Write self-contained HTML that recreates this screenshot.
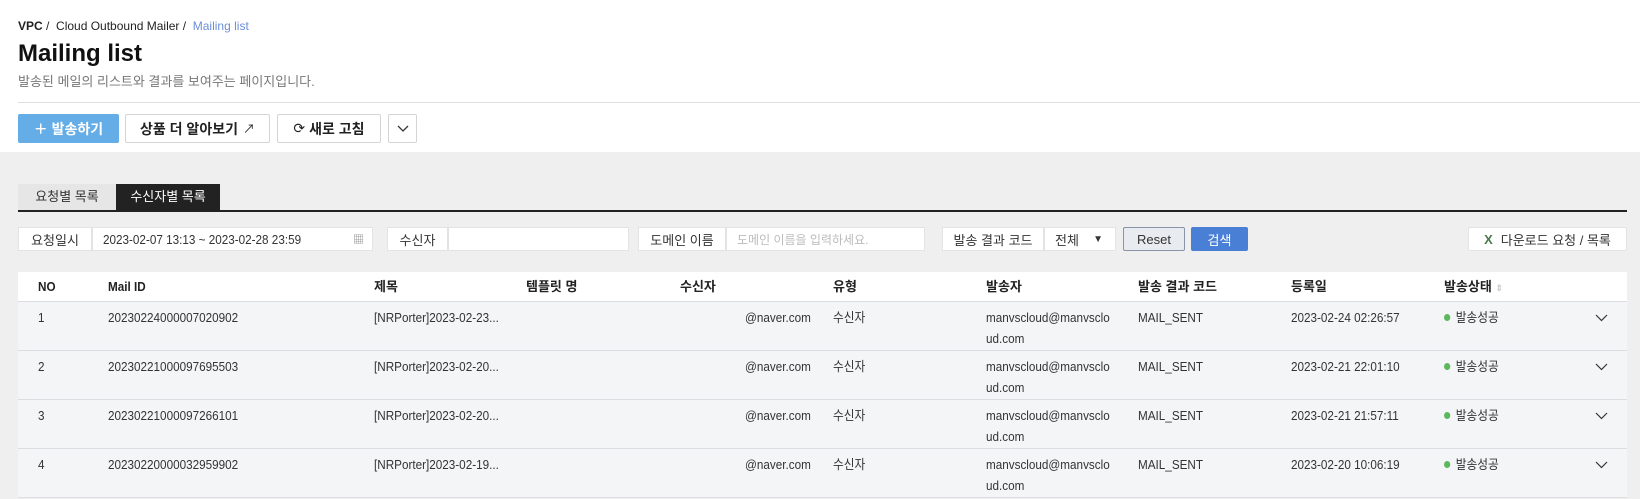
<!DOCTYPE html>
<html><head><meta charset="utf-8"><style>
*{box-sizing:border-box;margin:0;padding:0}
body{width:1640px;height:499px;overflow:hidden;background:#fff;font-family:"Liberation Sans","Noto Sans CJK KR",sans-serif;color:#222;position:relative}
.a{position:absolute}
.btn{position:absolute;top:114px;height:29px;border:1px solid #d5d5d5;border-radius:2px;background:#fff;font-size:14px;font-weight:bold;display:flex;align-items:center;justify-content:center;color:#222}
.box{position:absolute;top:227px;height:24px;background:#fff;border:1px solid #e3e3e3;font-size:13px;display:flex;align-items:center;color:#333}
.lbl{justify-content:center}
.h{position:absolute;top:272px;height:30px;line-height:30px;font-size:13px;font-weight:bold}
.row{position:absolute;left:18px;width:1609px;height:49px;background:#f4f5f7;border-bottom:1px solid #dcdde0}
.c{position:absolute;font-size:13px;line-height:21px;color:#333;transform:scaleX(0.9);transform-origin:left top;white-space:nowrap}
.sq{display:inline-block;transform:scaleX(0.9);transform-origin:left center}
.dot{display:inline-block;width:7px;height:7px;border-radius:50%;background:#5cb85c;margin-right:6px;vertical-align:1px}
</style></head><body>
<div class="a" style="left:18px;top:19px;font-size:12px;color:#222"><b>VPC</b> / &nbsp;Cloud Outbound Mailer / &nbsp;<span style="color:#6b8fd8">Mailing list</span></div>
<div class="a" style="left:18px;top:40px;font-size:24px;font-weight:bold;color:#111">Mailing list</div>
<div class="a" style="left:18px;top:71px;font-size:13px;color:#777">발송된 메일의 리스트와 결과를 보여주는 페이지입니다.</div>
<div class="a" style="left:18px;top:102px;width:1622px;height:1px;background:#e0e0e0"></div>
<div class="btn" style="left:18px;width:101px;background:#64ade6;border-color:#64ade6;color:#fff">＋ 발송하기</div>
<div class="btn" style="left:125px;width:145px">상품 더 알아보기 <span style="font-weight:normal;margin-left:5px;font-size:12px">↗</span></div>
<div class="btn" style="left:277px;width:104px"><span style="font-weight:normal;margin-right:4px">⟳</span>새로 고침</div>
<div class="btn" style="left:388px;width:29px"><svg width="12" height="8"><path d="M1 1l5 5 5-5" stroke="#333" fill="none" stroke-width="1.3"/></svg></div>
<div class="a" style="left:0;top:152px;width:1640px;height:347px;background:#efefef"></div>
<div class="a" style="left:18px;top:184px;width:98px;height:26px;background:#e6e6e6;font-size:13px;line-height:26px;text-align:center;color:#333">요청별 목록</div>
<div class="a" style="left:116px;top:184px;width:104px;height:26px;background:#222;font-size:13px;line-height:26px;text-align:center;color:#fff">수신자별 목록</div>
<div class="a" style="left:18px;top:210px;width:1609px;height:2px;background:#222"></div>
<div class="box lbl" style="left:18px;width:74px">요청일시</div>
<div class="box" style="left:92px;width:281px;padding-left:10px"><span class="sq">2023-02-07 13:13 ~ 2023-02-28 23:59</span><span style="position:absolute;right:8px;color:#888;font-size:11px">▦</span></div>
<div class="box lbl" style="left:387px;width:61px">수신자</div>
<div class="box" style="left:448px;width:181px"></div>
<div class="box lbl" style="left:638px;width:88px">도메인 이름</div>
<div class="box" style="left:726px;width:199px;padding-left:10px;color:#bbb;font-size:12px">도메인 이름을 입력하세요.</div>
<div class="box lbl" style="left:942px;width:102px">발송 결과 코드</div>
<div class="box" style="left:1044px;width:72px;padding-left:10px">전체<span style="position:absolute;right:12px;font-size:10px">▼</span></div>
<div class="box lbl" style="left:1123px;width:62px;background:#e8ebf0;border-color:#8b93a6;border-radius:2px">Reset</div>
<div class="box lbl" style="left:1191px;width:57px;background:#4a7fd6;border-color:#4a7fd6;color:#fff;border-radius:2px">검색</div>
<div class="box lbl" style="left:1468px;width:159px;border-radius:2px"><b style="color:#4a7a4a;margin-right:8px">X</b>다운로드 요청 / 목록</div>
<div class="a" style="left:18px;top:272px;width:1609px;height:30px;background:#fff;border-bottom:1px solid #dcdde0"></div>
<div class="h" style="left:38px"><span class="sq">NO</span></div>
<div class="h" style="left:108px"><span class="sq">Mail ID</span></div>
<div class="h" style="left:374px">제목</div>
<div class="h" style="left:526px">템플릿 명</div>
<div class="h" style="left:680px">수신자</div>
<div class="h" style="left:833px">유형</div>
<div class="h" style="left:986px">발송자</div>
<div class="h" style="left:1138px">발송 결과 코드</div>
<div class="h" style="left:1291px">등록일</div>
<div class="h" style="left:1444px">발송상태 <span style="color:#ccc;font-size:9px">⇕</span></div>

<div class="row" style="top:302px"></div>
<div class="row" style="top:351px"></div>
<div class="row" style="top:400px"></div>
<div class="row" style="top:449px"></div>

<div>
<div class="c" style="left:38px;top:307px">1</div><div class="c" style="left:108px;top:307px">20230224000007020902</div><div class="c" style="left:374px;top:307px">[NRPorter]2023-02-23...</div><div class="c" style="left:745px;top:307px">@naver.com</div><div class="c" style="left:833px;top:307px">수신자</div><div class="c" style="left:986px;top:307px">manvscloud@manvsclo<br>ud.com</div><div class="c" style="left:1138px;top:307px">MAIL_SENT</div><div class="c" style="left:1291px;top:307px">2023-02-24 02:26:57</div><div class="c" style="left:1444px;top:307px"><span class="dot"></span>발송성공</div>
<div class="c" style="left:38px;top:356px">2</div><div class="c" style="left:108px;top:356px">20230221000097695503</div><div class="c" style="left:374px;top:356px">[NRPorter]2023-02-20...</div><div class="c" style="left:745px;top:356px">@naver.com</div><div class="c" style="left:833px;top:356px">수신자</div><div class="c" style="left:986px;top:356px">manvscloud@manvsclo<br>ud.com</div><div class="c" style="left:1138px;top:356px">MAIL_SENT</div><div class="c" style="left:1291px;top:356px">2023-02-21 22:01:10</div><div class="c" style="left:1444px;top:356px"><span class="dot"></span>발송성공</div>
<div class="c" style="left:38px;top:405px">3</div><div class="c" style="left:108px;top:405px">20230221000097266101</div><div class="c" style="left:374px;top:405px">[NRPorter]2023-02-20...</div><div class="c" style="left:745px;top:405px">@naver.com</div><div class="c" style="left:833px;top:405px">수신자</div><div class="c" style="left:986px;top:405px">manvscloud@manvsclo<br>ud.com</div><div class="c" style="left:1138px;top:405px">MAIL_SENT</div><div class="c" style="left:1291px;top:405px">2023-02-21 21:57:11</div><div class="c" style="left:1444px;top:405px"><span class="dot"></span>발송성공</div>
<div class="c" style="left:38px;top:454px">4</div><div class="c" style="left:108px;top:454px">20230220000032959902</div><div class="c" style="left:374px;top:454px">[NRPorter]2023-02-19...</div><div class="c" style="left:745px;top:454px">@naver.com</div><div class="c" style="left:833px;top:454px">수신자</div><div class="c" style="left:986px;top:454px">manvscloud@manvsclo<br>ud.com</div><div class="c" style="left:1138px;top:454px">MAIL_SENT</div><div class="c" style="left:1291px;top:454px">2023-02-20 10:06:19</div><div class="c" style="left:1444px;top:454px"><span class="dot"></span>발송성공</div>
</div>
<svg class="a" style="left:1595px;top:314px" width="13" height="8"><path d="M1 1l5.5 5.5L12 1" stroke="#333" fill="none" stroke-width="1.2"/></svg>
<svg class="a" style="left:1595px;top:363px" width="13" height="8"><path d="M1 1l5.5 5.5L12 1" stroke="#333" fill="none" stroke-width="1.2"/></svg>
<svg class="a" style="left:1595px;top:412px" width="13" height="8"><path d="M1 1l5.5 5.5L12 1" stroke="#333" fill="none" stroke-width="1.2"/></svg>
<svg class="a" style="left:1595px;top:461px" width="13" height="8"><path d="M1 1l5.5 5.5L12 1" stroke="#333" fill="none" stroke-width="1.2"/></svg>
</body></html>
